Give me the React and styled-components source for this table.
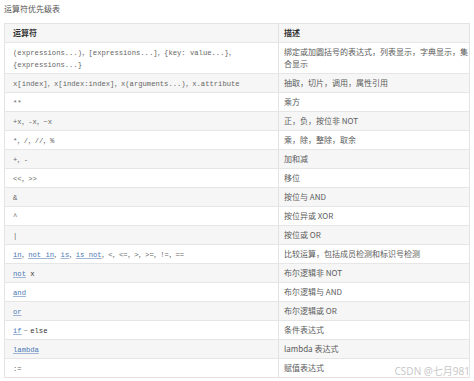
import React from "react";
import styled, { createGlobalStyle } from "styled-components";

const Global = createGlobalStyle`
  html, body { margin: 0; padding: 0; background: #fff; }
  body { font-family: "Noto Sans CJK SC", "Noto Sans", sans-serif; }
`;

const Page = styled.div`
  position: relative;
  width: 474px;
  height: 381px;
  padding: 3px 4px 0 4px;
  box-sizing: border-box;
  overflow: hidden;
`;

const Title = styled.div`
  font-size: 8px;
  line-height: 12px;
  height: 12px;
  color: #555;
  margin-bottom: 8px;
`;

const Table = styled.div`
  width: 466px;
  border: 1px solid #e4e4e4;
  box-sizing: border-box;
`;

const Row = styled.div`
  display: grid;
  grid-template-columns: 273px 1fr;
  background: ${(p) => (p.$shade ? "#f6f6f6" : "#fff")};
  border-bottom: 1px solid #e6e6e6;
  &:last-child { border-bottom: none; }
`;

const Cell = styled.div`
  padding: 3px 6px 3px 8px;
  font-size: 8px;
  line-height: 12px;
  min-height: 12px;
  color: #5a5a5a;
  white-space: nowrap;
  overflow: hidden;
  ${(p) => p.$right && "border-left: 1px solid #e2e2e2; padding-left: 5px;"}
  ${(p) => p.$head && "font-weight: bold; color: #333;"}
`;

const Line = styled.div`
  height: 12px;
  line-height: 12px;
`;

const Code = styled.span`
  font-family: "Liberation Mono", "DejaVu Sans Mono", monospace;
  font-size: 7.2px;
  line-height: 1;
  color: ${(p) => (p.$dark ? "#333" : "#666")};
`;

const Link = styled.span`
  font-family: "Liberation Mono", "DejaVu Sans Mono", monospace;
  font-size: 7.2px;
  line-height: 1;
  color: #4a78b5;
  text-decoration: underline;
  text-decoration-color: #9fb6d6;
  text-underline-offset: 1px;
`;

const Sep = styled.span`
  color: #777;
  line-height: 1;
  margin-right: ${(p) => (p.$wide ? "2.5px" : "0")};
`;

const Watermark = styled.div`
  position: absolute;
  right: 4px;
  bottom: 4px;
  font-family: "Noto Sans", "Noto Sans CJK SC", sans-serif;
  font-size: 10px;
  line-height: 12px;
  color: #c9c9c9;
  text-shadow: 0 0 2px #fff, 0 0 2px #fff;
`;

const C = ({ children }) => <Code>{children}</Code>;
const S = () => <Sep $wide>{", "}</Sep>;

const rows = [
  {
    op: (
      <>
        <Line>
          <C>(expressions...)</C><S /><C>[expressions...]</C><S /><C>{"{key: value...}"}</C><S />
        </Line>
        <Line>
          <C>{"{expressions...}"}</C>
        </Line>
      </>
    ),
    desc: (
      <>
        <Line>绑定或加圆括号的表达式，列表显示，字典显示，集</Line>
        <Line>合显示</Line>
      </>
    ),
  },
  {
    op: (
      <>
        <C>x[index]</C><S /><C>x[index:index]</C><S /><C>x(arguments...)</C><S /><C>x.attribute</C>
      </>
    ),
    desc: "抽取，切片，调用，属性引用",
  },
  { op: <C>**</C>, desc: "乘方" },
  {
    op: (
      <>
        <C>+x</C><S /><C>-x</C><S /><C>~x</C>
      </>
    ),
    desc: "正，负，按位非 NOT",
  },
  {
    op: (
      <>
        <C>*</C><S /><C>/</C><S /><C>//</C><S /><C>%</C>
      </>
    ),
    desc: "乘，除，整除，取余",
  },
  {
    op: (
      <>
        <C>+</C><S /><C>-</C>
      </>
    ),
    desc: "加和减",
  },
  {
    op: (
      <>
        <C>{"<<"}</C><S /><C>{">>"}</C>
      </>
    ),
    desc: "移位",
  },
  { op: <C>&amp;</C>, desc: "按位与 AND" },
  { op: <C>^</C>, desc: "按位异或 XOR" },
  { op: <C>|</C>, desc: "按位或 OR" },
  {
    op: (
      <>
        <Link>in</Link><S /><Link>not in</Link><S /><Link>is</Link><S /><Link>is not</Link><S />
        <C>{"<"}</C><S /><C>{"<="}</C><S /><C>{">"}</C><S /><C>{">="}</C><S /><C>!=</C><S /><C>==</C>
      </>
    ),
    desc: "比较运算，包括成员检测和标识号检测",
  },
  {
    op: (
      <>
        <Link>not</Link><Sep $wide>{" "}</Sep><Code $dark>x</Code>
      </>
    ),
    desc: "布尔逻辑非 NOT",
  },
  { op: <Link>and</Link>, desc: "布尔逻辑与 AND" },
  { op: <Link>or</Link>, desc: "布尔逻辑或 OR" },
  {
    op: (
      <>
        <Link>if</Link><Sep $wide>{" –"}</Sep><Code $dark>else</Code>
      </>
    ),
    desc: "条件表达式",
  },
  { op: <Link>lambda</Link>, desc: "lambda 表达式" },
  { op: <C>:=</C>, desc: "赋值表达式" },
];

export default function App() {
  return (
    <>
      <Global />
      <Page>
        <Title>运算符优先级表</Title>
        <Table>
          <Row $shade>
            <Cell $head>运算符</Cell>
            <Cell $head $right>描述</Cell>
          </Row>
          {rows.map((r, i) => (
            <Row key={i} $shade={i % 2 === 1}>
              <Cell>{r.op}</Cell>
              <Cell $right>{r.desc}</Cell>
            </Row>
          ))}
        </Table>
        <Watermark>CSDN @七月981</Watermark>
      </Page>
    </>
  );
}
